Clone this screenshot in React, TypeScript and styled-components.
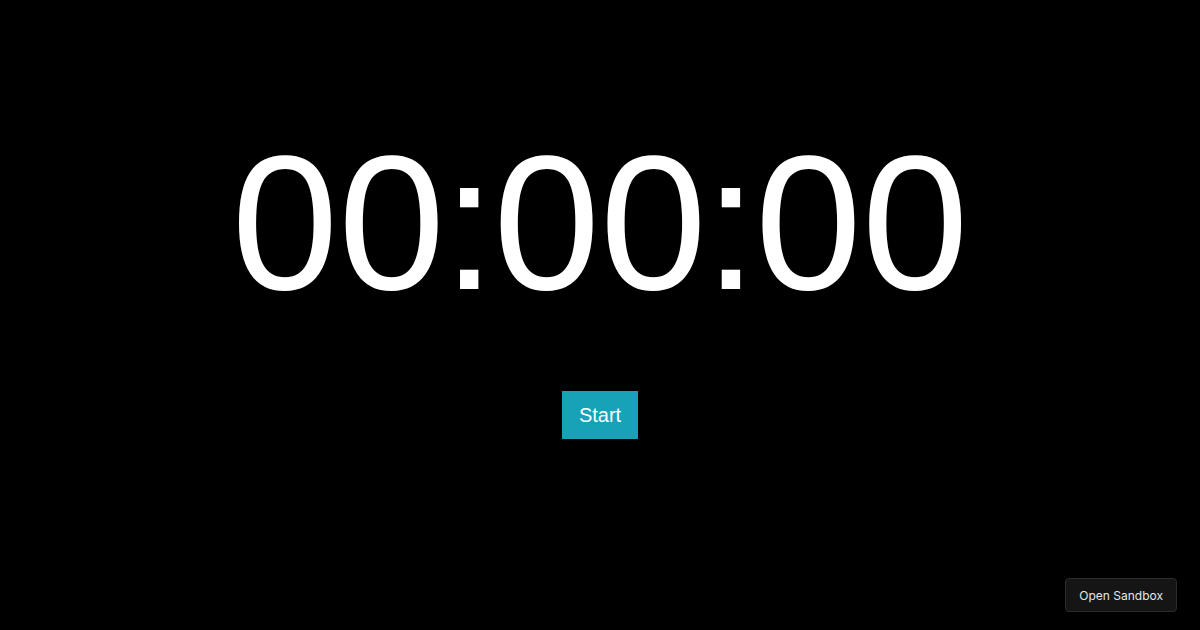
import React, { useEffect, useRef, useState } from "react";
import styled, { createGlobalStyle } from "styled-components";

const GlobalStyle = createGlobalStyle`
  html, body {
    margin: 0;
    padding: 0;
    background: #000;
  }
  body {
    font-family: "Liberation Sans", Arial, sans-serif;
  }
`;

const Page = styled.div`
  height: 630px;
  display: flex;
  flex-direction: column;
  align-items: center;
  background: #000;
`;

const Clock = styled.div`
  margin-top: 127px;
  font-size: 192px;
  line-height: 1;
  font-weight: 400;
  color: #fff;
  white-space: nowrap;
`;

const Colon = styled.span`
  margin: 0 -2.6px;
`;

const StartButton = styled.button`
  margin-top: 72px;
  padding: 8px 16px;
  border: 1px solid #17a2b8;
  border-radius: 0;
  background: #17a2b8;
  color: #fff;
  font-family: "Liberation Sans", Arial, sans-serif;
  font-size: 20px;
  line-height: 1.5;
  cursor: pointer;
`;

const SandboxLink = styled.a`
  position: fixed;
  right: 23px;
  bottom: 18px;
  display: flex;
  align-items: center;
  height: 34px;
  padding: 0 13px;
  box-sizing: border-box;
  background: #151515;
  border: 1px solid #2c2c2c;
  border-radius: 4px;
  color: #e6e6e6;
  font-family: Inter, "Noto Sans", sans-serif;
  font-size: 12px;
  text-decoration: none;
`;

const pad = (n: number) => String(n).padStart(2, "0");

export default function App() {
  const [seconds, setSeconds] = useState(0);
  const [running, setRunning] = useState(false);
  const timer = useRef<number | null>(null);

  useEffect(() => {
    if (running) {
      timer.current = window.setInterval(() => setSeconds((s) => s + 1), 1000);
    }
    return () => {
      if (timer.current) window.clearInterval(timer.current);
    };
  }, [running]);

  const h = Math.floor(seconds / 3600);
  const m = Math.floor((seconds % 3600) / 60);
  const s = seconds % 60;

  return (
    <Page>
      <GlobalStyle />
      <Clock>
        {pad(h)}
        <Colon>:</Colon>
        {pad(m)}
        <Colon>:</Colon>
        {pad(s)}
      </Clock>
      <StartButton onClick={() => setRunning(!running)}>
        {running ? "Stop" : "Start"}
      </StartButton>
      <SandboxLink href="#">Open Sandbox</SandboxLink>
    </Page>
  );
}
